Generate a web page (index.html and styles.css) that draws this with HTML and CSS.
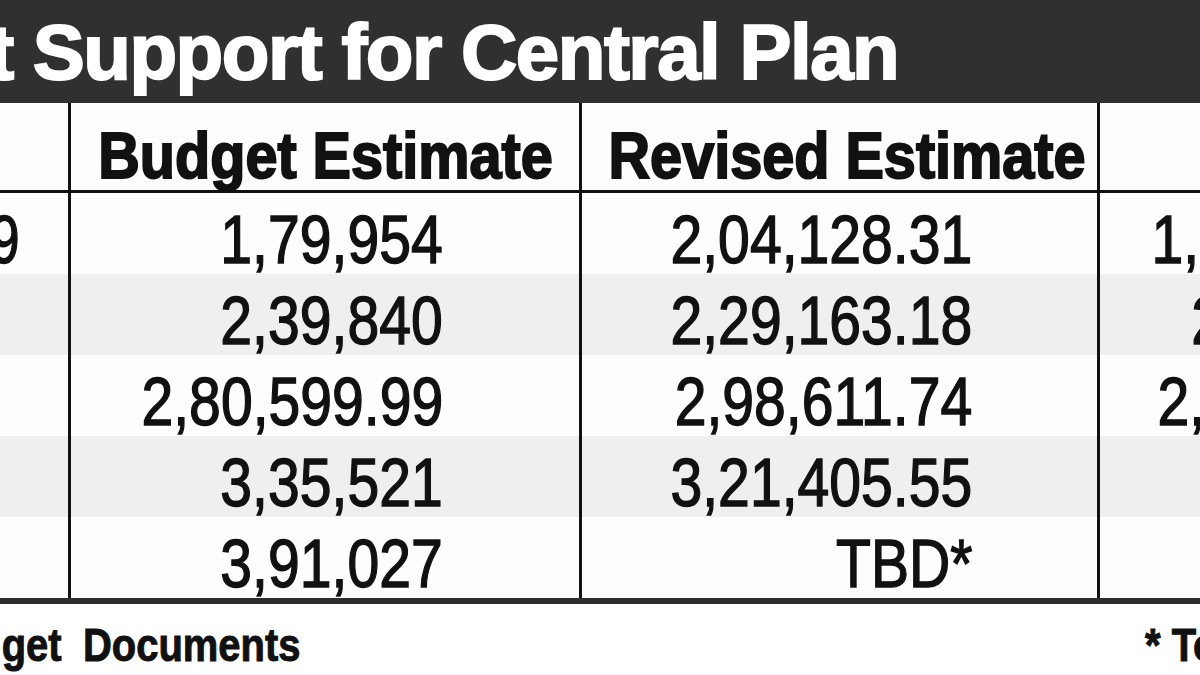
FILE: index.html
```html
<!DOCTYPE html>
<html lang="en">
<head>
<meta charset="utf-8">
<title>Budget Support for Central Plan</title>
<link rel="stylesheet" href="styles.css">
</head>
<body>
<div class="page">
  <div class="sheet">
    <div class="titlebar"><h1 class="title">Budget Support for Central Plan</h1></div>
    <div class="table">
      <div class="row">
        <div class="cell c1 head"><span class="txt">Year</span></div>
        <div class="cell c2 head"><span class="txt">Budget Estimate</span></div>
        <div class="cell c3 head"><span class="txt">Revised Estimate</span></div>
        <div class="cell c4 head"><span class="txt">Actual</span></div>
      </div>
      <div class="row">
        <div class="cell c1 num"><span class="txt">FY 2008-09</span></div>
        <div class="cell c2 num"><span class="txt">1,79,954</span></div>
        <div class="cell c3 num"><span class="txt">2,04,128.31</span></div>
        <div class="cell c4 num"><span class="txt">1,97,400.5</span></div>
      </div>
      <div class="row alt">
        <div class="cell c1 num"><span class="txt">2009-10</span></div>
        <div class="cell c2 num"><span class="txt">2,39,840</span></div>
        <div class="cell c3 num"><span class="txt">2,29,163.18</span></div>
        <div class="cell c4 num"><span class="txt">2,31,706</span></div>
      </div>
      <div class="row">
        <div class="cell c1 num"><span class="txt">2010-11</span></div>
        <div class="cell c2 num"><span class="txt">2,80,599.99</span></div>
        <div class="cell c3 num"><span class="txt">2,98,611.74</span></div>
        <div class="cell c4 num"><span class="txt">2,85,742.06</span></div>
      </div>
      <div class="row alt">
        <div class="cell c1 num"><span class="txt">2011-12</span></div>
        <div class="cell c2 num"><span class="txt">3,35,521</span></div>
        <div class="cell c3 num"><span class="txt">3,21,405.55</span></div>
        <div class="cell c4 num"><span class="txt">NA</span></div>
      </div>
      <div class="row">
        <div class="cell c1 num"><span class="txt">2012-13</span></div>
        <div class="cell c2 num"><span class="txt">3,91,027</span></div>
        <div class="cell c3 num"><span class="txt">TBD*</span></div>
        <div class="cell c4 num"><span class="txt">TBD*</span></div>
      </div>
    </div>
    <div class="footer">
      <p class="source"><span class="txt">Source: Budget Documents</span></p>
      <p class="note"><span class="txt">* To be decided</span></p>
    </div>
  </div>
</div>
</body>
</html>
```
FILE: styles.css
```css
* { box-sizing: border-box; margin: 0; padding: 0; }
html, body { margin: 0; background: #fff; }
.page {
  width: 1200px;
  height: 675px;
  overflow: hidden;
  background: #fff;
}
.sheet {
  width: 1780px;
  margin-left: -260px;
}
.titlebar {
  height: 103px;
  background: #303030;
  padding: 13px 0 0 13px;
}
.title {
  font-family: "Liberation Sans", Arial, sans-serif;
  font-weight: 700;
  font-size: 78px;
  line-height: 78px;
  letter-spacing: -1.5px;
  color: #fff;
  -webkit-text-stroke: 2px #fff;
  white-space: nowrap;
}
.txt { display: inline-block; white-space: nowrap; }
.table {
  display: grid;
  grid-template-columns: 328px 511px 518px 423px;
  grid-template-rows: 90px repeat(5, 81px);
  border-bottom: 6px solid #2d2d2d;
}
.row { display: contents; }
.cell {
  border-left: 3px solid #111;
  white-space: nowrap;
  overflow: hidden;
  color: #111;
  font-family: "Liberation Sans", Arial, sans-serif;
  background: #fdfdfd;
}
.c1 { border-left: none; }
.head {
  border-bottom: 3px solid #111;
  font-weight: 700;
  font-size: 64px;
  line-height: 64px;
  padding-top: 21px;
  text-align: center;
}
.head .txt {
  transform: scaleX(0.9);
  transform-origin: center;
  -webkit-text-stroke: 2px #111;
}
.num {
  font-weight: 400;
  font-size: 68px;
  line-height: 68px;
  padding-top: 12px;
  text-align: right;
}
.num .txt {
  transform: scaleX(0.84);
  transform-origin: right center;
  -webkit-text-stroke: 1.4px #111;
}
.num.c1 { text-align: left; }
.num.c1 .txt { transform: scaleX(0.79); transform-origin: left center; }
.num.c2 { padding-right: 136px; }
.num.c3 { padding-right: 125px; }
.num.c4 { padding-right: 106px; }
.alt .cell { background: #efefef; }
.footer {
  display: grid;
  grid-template-columns: 1357px 1fr;
  padding-top: 17px;
  font-family: "Liberation Sans", Arial, sans-serif;
  font-weight: 700;
  font-size: 47px;
  line-height: 48px;
  color: #111;
  white-space: nowrap;
}
.footer .txt {
  transform: scaleX(0.85);
  transform-origin: left center;
  -webkit-text-stroke: 1px #111;
}
.source { padding-left: 14px; word-spacing: 12px; }
.note { padding-left: 48px; }
```
